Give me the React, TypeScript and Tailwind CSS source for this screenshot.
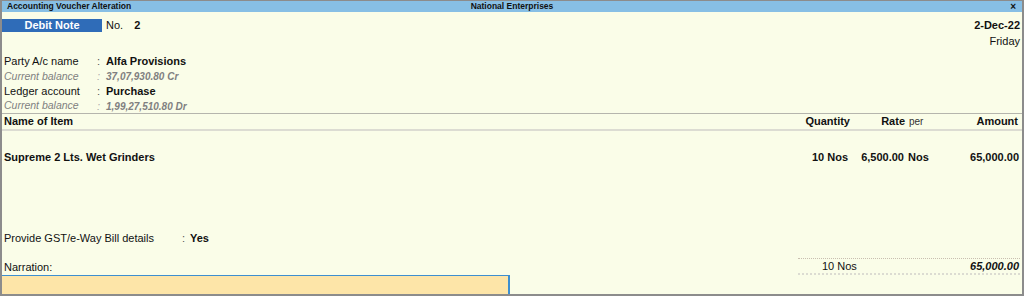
import React from "react";

const font = { fontFamily: '"Liberation Sans", Arial, sans-serif' };

export default function App() {
  return (
    <div
      className="w-[1024px] h-[296px] flex flex-col border-t border-x-2 border-b-2 border-[#8c8c8c] bg-[#fafde8] text-[11px] text-[#111] overflow-hidden"
      style={font}
    >
      {/* Title bar */}
      <div className="h-[11px] shrink-0 bg-[#87bfe5] grid grid-cols-3 items-center px-[5px] text-[8.5px] font-bold leading-[11px] text-[#111]">
        <div>Accounting Voucher Alteration</div>
        <div className="text-center">National Enterprises</div>
        <div className="text-right text-[10px] pr-[1px]">×</div>
      </div>

      {/* Main */}
      <div className="flex-1 flex flex-col">
        {/* Top section */}
        <div className="h-[42px] shrink-0 flex justify-between">
          <div className="pt-[7px] flex items-start">
            <div className="w-[100px] h-[13px] bg-[#2f6cb8] text-white font-bold text-center leading-[13px]">
              Debit Note
            </div>
            <div className="ml-[4px] leading-[13px]">No.</div>
            <div className="ml-[11px] font-bold leading-[13px]">2</div>
          </div>
          <div className="pt-[5px] pr-[2px] text-right leading-[16px]">
            <div className="font-bold">2-Dec-22</div>
            <div>Friday</div>
          </div>
        </div>

        {/* Party rows */}
        <div className="shrink-0 pl-[2px]">
          <div className="h-[15px] flex items-center">
            <div className="w-[93px]">Party A/c name</div>
            <div className="w-[9px] text-[#555]">:</div>
            <div className="font-bold">Alfa Provisions</div>
          </div>
          <div className="h-[15px] flex items-center italic text-[#808080]">
            <div className="w-[93px] text-[10.5px]">Current balance</div>
            <div className="w-[9px] text-[#aaa]">:</div>
            <div className="font-bold text-[10px]">37,07,930.80 Cr</div>
          </div>
          <div className="h-[15px] flex items-center">
            <div className="w-[93px]">Ledger account</div>
            <div className="w-[9px] text-[#555]">:</div>
            <div className="font-bold">Purchase</div>
          </div>
          <div className="h-[14px] flex items-center italic text-[#808080]">
            <div className="w-[93px] text-[10.5px]">Current balance</div>
            <div className="w-[9px] text-[#aaa]">:</div>
            <div className="font-bold text-[10px]">1,99,27,510.80 Dr</div>
          </div>
        </div>

        {/* Table header */}
        <div className="shrink-0 h-[18px] border-t border-b-2 border-t-[#b5b5ad] border-b-[#dcdcd2] flex items-center font-bold">
          <div className="flex-1 pl-[2px]">Name of Item</div>
          <div className="w-[90px] text-right">Quantity</div>
          <div className="w-[55px] text-right">Rate</div>
          <div className="w-[50px] pl-[4px] font-normal text-[10px] text-[#333]">per</div>
          <div className="w-[63px] text-right">Amount</div>
          <div className="w-[4px]" />
        </div>

        {/* Item row */}
        <div className="shrink-0 mt-[19px] h-[15px] flex items-center font-bold">
          <div className="flex-1 pl-[2px]">Supreme 2 Lts. Wet Grinders</div>
          <div className="w-[88px] text-right">10 Nos</div>
          <div className="w-[56px] text-right">6,500.00</div>
          <div className="w-[51px] pl-[4px]">Nos</div>
          <div className="w-[64px] text-right">65,000.00</div>
          <div className="w-[3px]" />
        </div>

        <div className="flex-1" />

        {/* GST row */}
        <div className="shrink-0 h-[15px] flex items-center pl-[2px]">
          <div className="w-[178px]">Provide GST/e-Way Bill details</div>
          <div className="w-[8px] text-[#555]">:</div>
          <div className="font-bold">Yes</div>
        </div>

        {/* Narration row */}
        <div className="shrink-0 mt-[12px] h-[17px] flex items-end">
          <div className="flex-1 pl-[2px] h-[15px] leading-[15px]">Narration:</div>
          <div className="w-[222px] mr-[2px] h-[17px] border-t border-dotted border-b-2 border-t-[#c9bfb0] border-b-[#dcdcd2] flex items-center">
            <div className="flex-1 pl-[24px]">10 Nos</div>
            <div className="font-bold italic pr-[1px]">65,000.00</div>
          </div>
        </div>

        {/* Narration input */}
        <div className="shrink-0 w-[508px] h-[19px] bg-[#fde5a8] border-t border-r-2 border-[#3d8fd0]" />
      </div>
    </div>
  );
}
